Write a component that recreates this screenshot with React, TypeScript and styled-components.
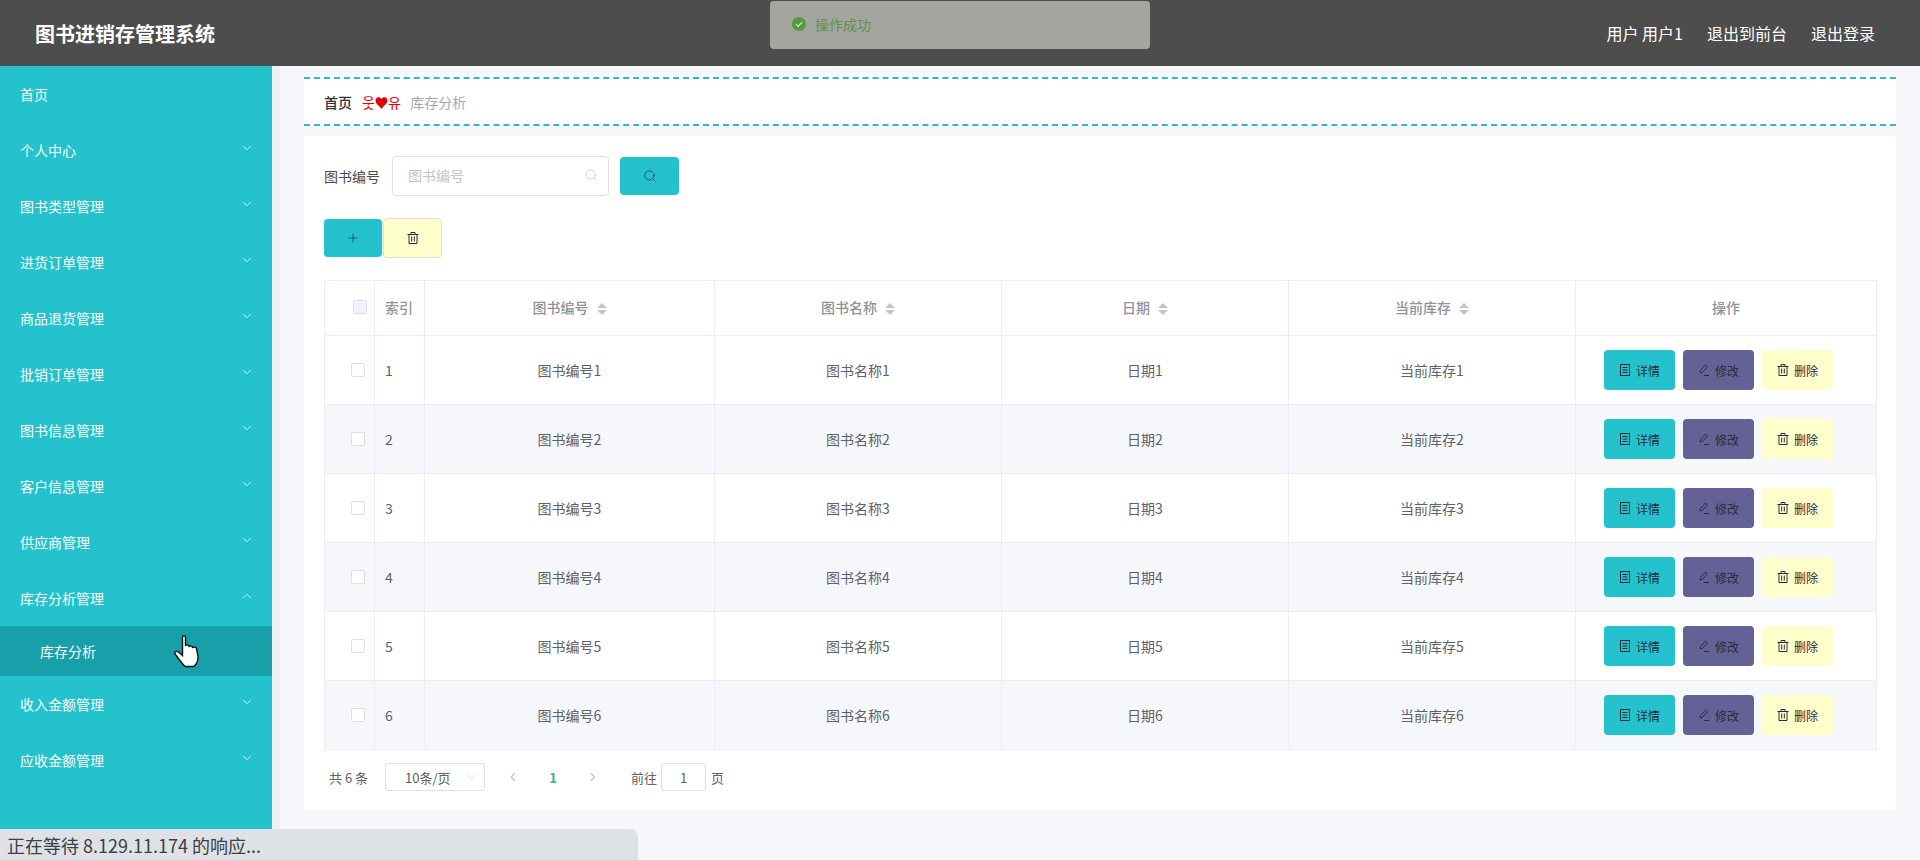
import React from "react";
import styled, { createGlobalStyle } from "styled-components";
import { ChevronDown, ChevronLeft, ChevronRight, ChevronUp, Plus, Search } from "lucide-react";

const TEAL = "#23c2cd";
const FONT = '"Noto Sans CJK SC", "Liberation Sans", sans-serif';

const GlobalStyle = createGlobalStyle`
  html, body {
    margin: 0;
    padding: 0;
    height: 860px;
    overflow: hidden;
    background: #f5f7fa;
    font-family: ${FONT};
  }
  * {
    box-sizing: border-box;
  }
`;

const Page = styled.div`
  position: relative;
  width: 1920px;
  height: 860px;
  overflow: hidden;
  display: flex;
  flex-direction: column;
`;

const TopBar = styled.header`
  height: 66px;
  flex: none;
  background: #4d4d4d;
  display: flex;
  align-items: center;
  justify-content: space-between;
  padding: 0 45px 0 35px;
  color: #fff;
`;

const Title = styled.div`
  font-size: 20px;
  font-weight: 700;
`;

const UserLinks = styled.div`
  display: flex;
  gap: 24px;
  font-size: 16px;
`;

const Toast = styled.div`
  position: absolute;
  top: 1px;
  left: 770px;
  width: 380px;
  height: 48px;
  background: #a2a69e;
  border-radius: 4px;
  display: flex;
  align-items: center;
  gap: 9px;
  padding: 0 0 2px 22px;
  color: #66904f;
  font-size: 14px;
`;

const Body = styled.div`
  flex: 1;
  display: flex;
  min-height: 0;
`;

const Sidebar = styled.nav`
  width: 272px;
  flex: none;
  background: ${TEAL};
  color: #fff;
  font-size: 14px;
`;

const MenuItem = styled.div`
  height: 56px;
  display: flex;
  align-items: center;
  justify-content: space-between;
  padding: 0 18px 0 20px;

  svg {
    margin-bottom: 4px;
    opacity: 0.9;
  }
`;

const SubMenuItem = styled.div`
  height: 50px;
  display: flex;
  align-items: center;
  padding-left: 40px;
  background: #18a0aa;
`;

const Gutter = styled.div`
  width: 8px;
  flex: none;
  background: #eff0f3;
`;

const Main = styled.main`
  flex: 1;
  min-width: 0;
  padding: 11px 24px 0;
`;

const Breadcrumb = styled.div`
  height: 49px;
  background: #fff;
  border-top: 2px dashed #2fb9c4;
  border-bottom: 2px dashed #2fb9c4;
  display: flex;
  align-items: center;
  padding-left: 20px;
  font-size: 14px;
`;

const CrumbHome = styled.span`
  color: #303133;
  font-weight: 500;
`;

const CrumbSeparator = styled.span`
  margin: 0 10px;
  color: #e00000;
  font-family: "Noto Sans CJK KR", sans-serif;
  font-size: 14px;
  letter-spacing: -0.5px;
`;

const CrumbCurrent = styled.span`
  color: #a4a7ae;
`;

const Card = styled.section`
  margin-top: 10px;
  height: 674px;
  background: #fff;
  padding: 20px 20px 0;
`;

const FilterRow = styled.div`
  display: flex;
  align-items: center;
  height: 40px;
`;

const FilterLabel = styled.label`
  width: 68px;
  font-size: 14px;
  color: #4a4c50;
`;

const InputBox = styled.div`
  width: 217px;
  height: 40px;
  border: 1px solid #dcdfe6;
  border-radius: 4px;
  display: flex;
  align-items: center;
  justify-content: space-between;
  padding: 0 10px 2px 15px;
  font-size: 14px;
  color: #c0c4cc;
`;

const ActionButton = styled.button<{ $tone: "teal" | "purple" | "yellow" }>`
  border: none;
  border-radius: 4px;
  padding: 0;
  display: flex;
  align-items: center;
  justify-content: center;
  font-family: ${FONT};
  font-size: 12px;
  color: #2b2b3a;
  background: ${({ $tone }) =>
    $tone === "teal" ? TEAL : $tone === "purple" ? "#636196" : "#ffffcc"};
`;

const SearchButton = styled(ActionButton)`
  width: 59px;
  height: 38px;
  margin-left: 11px;
`;

const Toolbar = styled.div`
  display: flex;
  align-items: center;
  gap: 1px;
  margin-top: 22px;
  height: 40px;
`;

const AddButton = styled(ActionButton)`
  width: 58px;
  height: 38px;
`;

const RemoveButton = styled(ActionButton)`
  width: 59px;
  height: 40px;
  border: 1px solid #dfe0d0;
`;

const Table = styled.table`
  margin-top: 22px;
  width: 1552px;
  table-layout: fixed;
  border-collapse: collapse;
  font-size: 14px;
  color: #606266;
`;

const HeadCell = styled.th<{ $left?: boolean }>`
  height: 55px;
  padding: 0 0 2px ${({ $left }) => ($left ? "10px" : "0")};
  border: 1px solid #ebeef5;
  font-weight: 500;
  color: #909399;
  text-align: ${({ $left }) => ($left ? "left" : "center")};
`;

const BodyRow = styled.tr<{ $striped: boolean }>`
  background: ${({ $striped }) => ($striped ? "#f5f7fa" : "#fff")};
`;

const BodyCell = styled.td<{ $left?: boolean }>`
  height: 69px;
  padding: 0 0 0 ${({ $left }) => ($left ? "10px" : "0")};
  border: 1px solid #ebeef5;
  text-align: ${({ $left }) => ($left ? "left" : "center")};
`;

const CheckBox = styled.span<{ $head?: boolean }>`
  display: block;
  width: 14px;
  height: 14px;
  margin: 0 0 0 ${({ $head }) => ($head ? "18px" : "16px")};
  border: 1px solid #dcdfe6;
  border-radius: 2px;
  background: ${({ $head }) => ($head ? "#edf2fc" : "#fff")};
`;

const SortCaret = styled.span`
  display: inline-flex;
  flex-direction: column;
  gap: 2px;
  margin-left: 8px;
  vertical-align: middle;

  &::before,
  &::after {
    content: "";
    border-left: 5px solid transparent;
    border-right: 5px solid transparent;
  }
  &::before {
    border-bottom: 5px solid #c0c4cc;
  }
  &::after {
    border-top: 5px solid #c0c4cc;
  }
`;

const RowActions = styled.div`
  display: flex;
  gap: 8px;
  padding-left: 28px;
`;

const RowButton = styled(ActionButton)`
  width: 71px;
  height: 40px;
  gap: 5px;
`;

const Pagination = styled.div`
  display: flex;
  align-items: center;
  height: 28px;
  margin-top: 13px;
  padding-left: 5px;
  font-size: 13px;
  color: #606266;
`;

const Total = styled.span`
  width: 56px;
`;

const PageSize = styled.div`
  width: 100px;
  height: 28px;
  border: 1px solid #dcdfe6;
  border-radius: 3px;
  display: flex;
  align-items: center;
  justify-content: space-between;
  padding: 0 6px 0 19px;

  svg {
    color: #c0c4cc;
  }
`;

const Pager = styled.div`
  width: 118px;
  margin: 0 19px 0 9px;
  display: flex;
  align-items: center;
  justify-content: space-between;
  padding: 0 12px;
  color: #c0c4cc;
`;

const PageNumber = styled.span`
  color: #2bb58f;
  font-weight: 700;
`;

const JumpBox = styled.div`
  width: 45px;
  height: 28px;
  margin: 0 5px 0 4px;
  border: 1px solid #dcdfe6;
  border-radius: 3px;
  display: flex;
  align-items: center;
  justify-content: center;
`;

const StatusBubble = styled.div`
  position: absolute;
  left: 0;
  bottom: 0;
  width: 638px;
  height: 31px;
  background: #dee1e6;
  border-top-right-radius: 8px;
  padding-left: 7px;
  display: flex;
  align-items: center;
  font-size: 18px;
  color: #3c4043;
  white-space: nowrap;
`;

const HandCursor = styled.svg`
  position: absolute;
  left: 174px;
  top: 635px;
`;

const TicketIcon = () => (
  <svg width="12" height="12" viewBox="0 0 12 12" fill="none" stroke="currentColor" strokeWidth="1">
    <rect x="1.5" y="0.5" width="9" height="11" />
    <path d="M3.5 3.5h5M3.5 6h5M3.5 8.5h5" />
  </svg>
);

const EditIcon = () => (
  <svg width="12" height="12" viewBox="0 0 12 12" fill="none" stroke="currentColor" strokeWidth="1">
    <path d="M2 9l.6-2.6L7.5 1l2 1.8L4.4 8.4z" />
    <path d="M6 11.5h5" />
  </svg>
);

const TrashIcon = () => (
  <svg width="12" height="12" viewBox="0 0 12 12" fill="none" stroke="currentColor" strokeWidth="1">
    <path d="M0.5 2.5h11M4 2.5V0.5h4v2M2 2.5v9h8v-9M4.7 4.5v5M7.3 4.5v5" />
  </svg>
);

const SuccessIcon = () => (
  <svg width="14" height="14" viewBox="0 0 14 14">
    <circle cx="7" cy="7" r="7" fill="#5a9a3c" />
    <path d="M4 7.2l2.2 2.1L10 5.2" fill="none" stroke="#c8d8c0" strokeWidth="1.3" />
  </svg>
);

const menus = [
  "个人中心",
  "图书类型管理",
  "进货订单管理",
  "商品退货管理",
  "批销订单管理",
  "图书信息管理",
  "客户信息管理",
  "供应商管理",
];

const rows = [1, 2, 3, 4, 5, 6];
const sortable = ["图书编号", "图书名称", "日期", "当前库存"];
const widths = [50, 50, 290, 287, 287, 287, 301];

const App = () => (
  <Page>
    <GlobalStyle />
    <TopBar>
      <Title>图书进销存管理系统</Title>
      <UserLinks>
        <span>用户 用户1</span>
        <span>退出到前台</span>
        <span>退出登录</span>
      </UserLinks>
    </TopBar>
    <Body>
      <Sidebar>
        <MenuItem>首页</MenuItem>
        {menus.map((name) => (
          <MenuItem key={name}>
            {name}
            <ChevronDown size={14} strokeWidth={1.5} />
          </MenuItem>
        ))}
        <MenuItem>
          库存分析管理
          <ChevronUp size={14} strokeWidth={1.5} />
        </MenuItem>
        <SubMenuItem>库存分析</SubMenuItem>
        <MenuItem>
          收入金额管理
          <ChevronDown size={14} strokeWidth={1.5} />
        </MenuItem>
        <MenuItem>
          应收金额管理
          <ChevronDown size={14} strokeWidth={1.5} />
        </MenuItem>
      </Sidebar>
      <Gutter />
      <Main>
        <Breadcrumb>
          <CrumbHome>首页</CrumbHome>
          <CrumbSeparator>웃♥유</CrumbSeparator>
          <CrumbCurrent>库存分析</CrumbCurrent>
        </Breadcrumb>
        <Card>
          <FilterRow>
            <FilterLabel>图书编号</FilterLabel>
            <InputBox>
              图书编号
              <Search size={14} strokeWidth={1.2} />
            </InputBox>
            <SearchButton $tone="teal">
              <Search size={14} strokeWidth={1.2} />
            </SearchButton>
          </FilterRow>
          <Toolbar>
            <AddButton $tone="teal">
              <Plus size={14} strokeWidth={1.2} />
            </AddButton>
            <RemoveButton $tone="yellow">
              <TrashIcon />
            </RemoveButton>
          </Toolbar>
          <Table>
            <colgroup>
              {widths.map((w, i) => (
                <col key={i} width={w} />
              ))}
            </colgroup>
            <thead>
              <tr>
                <HeadCell $left>
                  <CheckBox $head />
                </HeadCell>
                <HeadCell $left>索引</HeadCell>
                {sortable.map((name) => (
                  <HeadCell key={name}>
                    {name}
                    <SortCaret />
                  </HeadCell>
                ))}
                <HeadCell>操作</HeadCell>
              </tr>
            </thead>
            <tbody>
              {rows.map((n) => (
                <BodyRow key={n} $striped={n % 2 === 0}>
                  <BodyCell $left>
                    <CheckBox />
                  </BodyCell>
                  <BodyCell $left>{n}</BodyCell>
                  {sortable.map((name) => (
                    <BodyCell key={name}>
                      {name}
                      {n}
                    </BodyCell>
                  ))}
                  <BodyCell>
                    <RowActions>
                      <RowButton $tone="teal">
                        <TicketIcon />
                        详情
                      </RowButton>
                      <RowButton $tone="purple">
                        <EditIcon />
                        修改
                      </RowButton>
                      <RowButton $tone="yellow">
                        <TrashIcon />
                        删除
                      </RowButton>
                    </RowActions>
                  </BodyCell>
                </BodyRow>
              ))}
            </tbody>
          </Table>
          <Pagination>
            <Total>共 6 条</Total>
            <PageSize>
              10条/页
              <ChevronDown size={14} strokeWidth={1} />
            </PageSize>
            <Pager>
              <ChevronLeft size={14} />
              <PageNumber>1</PageNumber>
              <ChevronRight size={14} />
            </Pager>
            <span>前往</span>
            <JumpBox>1</JumpBox>
            <span>页</span>
          </Pagination>
        </Card>
      </Main>
    </Body>
    <Toast>
      <SuccessIcon />
      操作成功
    </Toast>
    <StatusBubble>正在等待 8.129.11.174 的响应...</StatusBubble>
    <HandCursor width="26" height="33" viewBox="0 0 26 33">
      <path
        d="M8.5 2C8.5.5 11.5.5 11.5 2L11.5 11C12 9.5 14.5 9.5 15 11V12C15.5 10.5 18 10.5 18.5 12V13C19 11.8 22 11.8 22.5 13.5L24 21C24.5 26 22 29.5 20 31.5H11C8 28.5 5 24.5 1 19C0 17 2.5 15.5 4.5 17L8.5 20.5Z"
        fill="#fff"
        stroke="#111"
        strokeWidth="1.4"
      />
    </HandCursor>
  </Page>
);

export default App;
